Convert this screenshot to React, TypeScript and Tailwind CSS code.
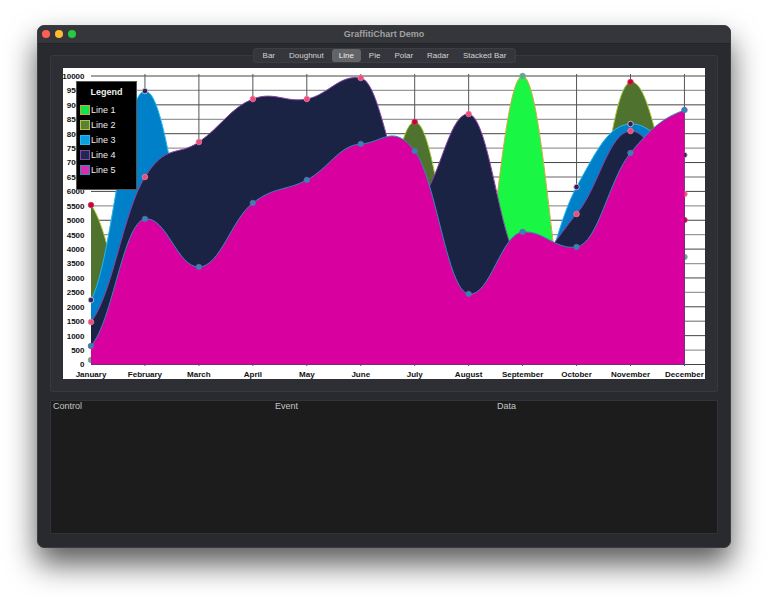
const months = ["January", "February", "March", "April", "May", "June", "July", "August", "September", "October", "November", "December"];
const tabs = ["Bar", "Doughnut", "Line", "Pie", "Polar", "Radar", "Stacked Bar"];
const yLabels = Array.from({ length: 21 }, (_, i) => i * 500);

const BASE = 364.5;
const xs = months.map((_, i) => 91 + i * 53.95);
const yOf = (v: number) => BASE - (v / 10000) * 288.5;

// y values are screen pixels, the hidden ones are only guessed from where the curves disappear
const series = [
  { name: "Line 1", fill: "#19f644", stroke: "#d8a848", dot: "#4fb08a", ring: "#8a9a90", swatch: "#0ae84a", ys: [360, 352, 345, 340, 340, 340, 338, 350, 76, 355, 335, 257] },
  { name: "Line 2", fill: "#4f732e", stroke: "#a8c840", dot: "#d00034", ring: "#c04060", swatch: "#5f7f36", ys: [205, 355, 345, 340, 345, 340, 122, 335, 345, 320, 82, 220] },
  { name: "Line 3", fill: "#0080c8", stroke: "#28b8e8", dot: "#3a1a62", ring: "#c8d0d0", swatch: "#0a9fe0", ys: [300, 91, 285, 330, 330, 320, 330, 340, 330, 187, 124, 155] },
  { name: "Line 4", fill: "#1a2344", stroke: "#8a44a8", dot: "#f04a78", ring: "#e880a0", swatch: "#1f2a50", ys: [322, 177, 142, 99, 99, 78, 200, 114, 262, 214, 131, 194] },
  { name: "Line 5", fill: "#d8009e", stroke: "#2b8fb8", dot: "#1f90b0", ring: "#8a50a8", swatch: "#e02aac", ys: [346, 219, 267, 203, 180, 144, 151, 294, 232, 247, 153, 110] },
];
const swatchBorders = ["#d8a030", "#a8c840", "#28b8e8", "#8a44a8", "#2b8fb8"];

// slope at a point, nearly flat on peaks and dips so the curve doesn't overshoot its marker
const slope = (ys: number[], i: number) => {
  const prev = ys[Math.max(i - 1, 0)];
  const next = ys[Math.min(i + 1, ys.length - 1)];
  const isPeak = (ys[i] - prev) * (next - ys[i]) < 0;
  return (next - prev) * 0.19 * (isPeak ? 0.2 : 1);
};

const curve = (ys: number[]) => {
  const step = xs[1] - xs[0];
  let d = `M${xs[0]} ${ys[0]}`;
  for (let i = 0; i < ys.length - 1; i++) {
    d += ` C${xs[i] + step * 0.4} ${ys[i] + slope(ys, i)} ${xs[i + 1] - step * 0.4} ${ys[i + 1] - slope(ys, i + 1)} ${xs[i + 1]} ${ys[i + 1]}`;
  }
  return d;
};

const Chart = () => (
  <svg viewBox="63 68 642 311" className="absolute inset-0 w-full h-full">
    {yLabels.map((v, i) => (
      <g key={v}>
        <line x1="91" x2="705" y1={yOf(v)} y2={yOf(v)} stroke={i % 2 === 0 ? "#444" : "#999"} strokeWidth={i % 2 === 0 ? 1 : 1.3} />
        <text x="84.5" y={yOf(v) + 2.9} textAnchor="end" fontSize="8" fontWeight="700" fill="#111">{v}</text>
      </g>
    ))}
    {months.map((m, i) => (
      <g key={m}>
        {i > 0 && <line x1={xs[i]} x2={xs[i]} y1="74" y2="366" stroke="#555" strokeWidth="1" />}
        <text x={xs[i]} y="377" textAnchor="middle" fontSize="8" fontWeight="700" fill="#111">{m}</text>
      </g>
    ))}
    {series.map((s) => (
      <g key={s.name}>
        <path d={`${curve(s.ys)} L${xs[11]} ${BASE} L${xs[0]} ${BASE} Z`} fill={s.fill} />
        <path d={curve(s.ys)} fill="none" stroke={s.stroke} strokeWidth="1" />
        {s.ys.map((y, i) => (
          <circle key={i} cx={xs[i]} cy={y} r="2.8" fill={s.dot} stroke={s.ring} strokeWidth="0.8" />
        ))}
      </g>
    ))}
  </svg>
);

const Legend = () => (
  <div className="absolute left-[13px] top-[13px] w-[61px] h-[109px] bg-black border border-[#555] text-[#eee] text-[9px] leading-none">
    <div className="text-center font-bold mt-[6px] mb-[7px]">Legend</div>
    <div className="flex flex-col gap-[3px] pl-[3px]">
      {series.map((s, i) => (
        <div key={s.name} className="flex items-center gap-[1px] h-[12px]">
          <span className="w-[10px] h-[10px] border" style={{ backgroundColor: s.swatch, borderColor: swatchBorders[i] }} />
          <span>{s.name}</span>
        </div>
      ))}
    </div>
  </div>
);

export default function App() {
  return (
    <div className="w-[768px] h-[597px] bg-white overflow-hidden pt-[25px] pl-[37px] font-['Liberation_Sans',sans-serif]">
      <div className="w-[694px] h-[523px] bg-[#292a2f] rounded-[7px] border border-[#3c3d40] shadow-[0_16px_30px_rgba(0,0,0,0.65)] flex flex-col overflow-hidden">
        {/* title bar */}
        <div className="relative h-[18px] shrink-0 bg-[#35363a] border-b border-[#222327] flex items-center justify-center">
          <div className="absolute left-[4px] top-[4px] flex gap-[5px]">
            <span className="w-[8px] h-[8px] rounded-full bg-[#ff5f57]" />
            <span className="w-[8px] h-[8px] rounded-full bg-[#febc2e]" />
            <span className="w-[8px] h-[8px] rounded-full bg-[#28c840]" />
          </div>
          <span className="text-[9px] font-bold text-[#a0a0a2]">GraffitiChart Demo</span>
        </div>

        <div className="flex-1 flex flex-col px-[12px] pt-[11px] pb-[13px]">
          {/* chart group */}
          <div className="relative w-[668px] h-[337px] shrink-0 bg-[#2e2f34] border border-[#37383c] rounded-[2px] p-[12px]">
            <div className="absolute left-[202px] -top-[8px] w-[263px] h-[15px] bg-[#35363b] rounded-[3px] border border-[#3d3e43] flex items-center justify-center text-[8px] text-[#d4d4d6]">
              {tabs.map((t) => (
                <span key={t} className={t === "Line" ? "h-[13px] px-[7px] flex items-center rounded-[3px] bg-[#636467] text-[#eee] mx-[1px]" : "px-[6px] mx-[1px]"}>{t}</span>
              ))}
            </div>
            <div className="relative w-[642px] h-[311px] bg-white">
              <Chart />
              <Legend />
            </div>
          </div>

          {/* event table */}
          <div className="mt-[8px] w-[668px] h-[134px] bg-[#1c1c1c] border border-[#333438] rounded-[1px] grid grid-cols-[222px_222px_1fr] content-start px-[2px] text-[9px] leading-[11px] text-[#c4c4c4]">
            <span>Control</span>
            <span>Event</span>
            <span>Data</span>
          </div>
        </div>
      </div>
    </div>
  );
}
